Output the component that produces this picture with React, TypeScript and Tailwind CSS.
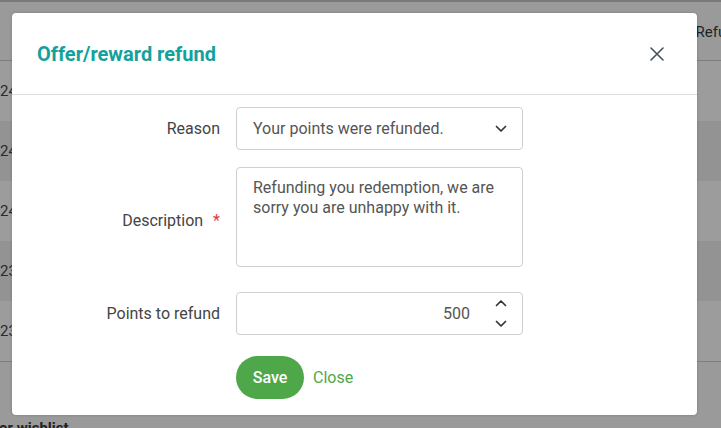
import React from 'react';

const rows = ['24', '24', '24', '23', '23'];

function Chevron({ up = false }: { up?: boolean }) {
  return (
    <svg width="12" height="8" viewBox="0 0 12 8" fill="none">
      <path
        d={up ? 'M1.5 6.5L6 2l4.5 4.5' : 'M1.5 1.5L6 6l4.5-4.5'}
        stroke="#333"
        strokeWidth="1.7"
        strokeLinecap="round"
        strokeLinejoin="round"
      />
    </svg>
  );
}

export default function App() {
  return (
    <div
      className="relative w-[721px] h-[428px] overflow-hidden bg-[#9a9a9a]"
      style={{ fontFamily: 'Roboto, "Liberation Sans", sans-serif' }}
    >
      {/* page behind the overlay */}
      <div className="border-t-2 border-[#7a7a7a]">
        <div className="h-[59px] flex justify-end items-center pt-[2px] border-b border-[#7e7e7e]">
          <span className="text-[15px] text-[#222] -mr-[22px]">Refund</span>
        </div>
        {rows.map((r, i) => (
          <div
            key={i}
            className={`h-[60px] flex items-center text-[15px] text-[#2a2a2a] ${i % 2 === 0 ? 'bg-[#9c9c9c]' : 'bg-[#939393]'}`}
          >
            {r}
          </div>
        ))}
        <div className="border-t border-[#7e7e7e] h-[56px]" />
        <div className="text-[15px] font-bold text-[#222] -ml-[1px]">or wishlist</div>
      </div>

      {/* modal */}
      <div className="absolute left-[12px] top-[13px] w-[685px] h-[402px] bg-white rounded-[4px] shadow-[0_0_3px_rgba(0,0,0,0.2)]">
        <div className="h-[82px] flex items-center justify-between pl-[25px] pr-[32px] border-b border-[#dcdcdc]">
          <h2 className="text-[20px] font-bold text-[#14a19e]">Offer/reward refund</h2>
          <svg width="16" height="16" viewBox="0 0 16 16" fill="none">
            <path d="M2 2l12 12M14 2L2 14" stroke="#44525a" strokeWidth="1.6" strokeLinecap="round" />
          </svg>
        </div>

        <div className="pt-[12px] pl-[16px] flex flex-col text-[16px]">
          <div className="flex items-center">
            <label className="w-[192px] text-right text-[#444]">Reason</label>
            <div className="ml-[16px] w-[287px] h-[43px] border border-[#cfcfcf] rounded-[4px] flex items-center justify-between pl-[16px] pr-[15px] text-[#555]">
              <span>Your points were refunded.</span>
              <Chevron />
            </div>
          </div>

          <div className="flex items-center mt-[17px]">
            <label className="w-[192px] text-right text-[#444] pt-[8px]">
              Description <span className="text-[#e53935] ml-[6px]">*</span>
            </label>
            <div className="ml-[16px] w-[287px] h-[100px] border border-[#cfcfcf] rounded-[4px] pl-[16px] pr-[12px] pt-[10px] text-[#555] leading-[20px]">
              Refunding you redemption, we are sorry you are unhappy with it.
            </div>
          </div>

          <div className="flex items-center mt-[25px]">
            <label className="w-[192px] text-right text-[#444]">Points to refund</label>
            <div className="ml-[16px] w-[287px] h-[43px] border border-[#cfcfcf] rounded-[4px] flex items-center justify-end pr-[15px] text-[#555]">
              <span className="mr-[25px]">500</span>
              <div className="flex flex-col gap-[13px]">
                <Chevron up />
                <Chevron />
              </div>
            </div>
          </div>

          <div className="flex items-center mt-[21px] ml-[208px]">
            <button className="w-[68px] h-[43px] rounded-full bg-[#4ea84a] text-white text-[16px] font-medium">
              Save
            </button>
            <span className="ml-[9px] text-[#4ea84a]">Close</span>
          </div>
        </div>
      </div>
    </div>
  );
}
